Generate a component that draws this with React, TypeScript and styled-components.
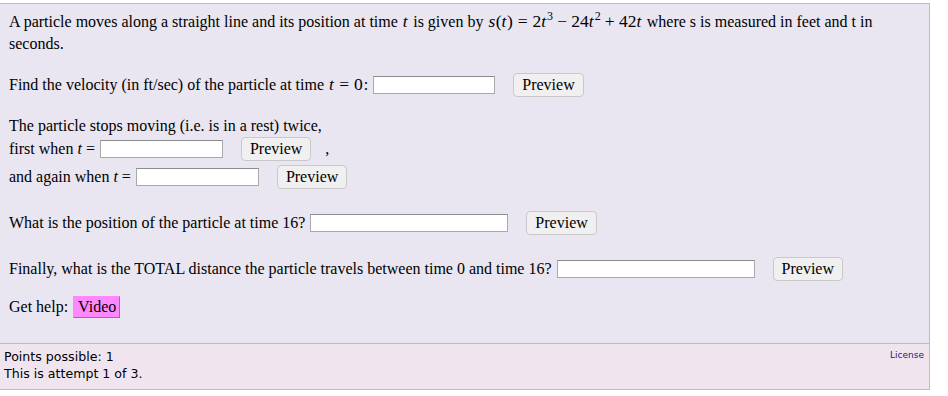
import React from "react";
import styled, { createGlobalStyle } from "styled-components";

const GlobalStyle = createGlobalStyle`
  html, body {
    margin: 0;
    padding: 0;
    background: #ffffff;
  }
  body {
    font-family: "Liberation Serif", "Times New Roman", serif;
    font-size: 16px;
    color: #000000;
  }
`;

const App = () => {
  return (
    <>
      <GlobalStyle />
      <Page>
        <QuestionBox>
          <Intro>
            A particle moves along a straight line and its position at time{" "}
            <MathExpr>
              <Var>t</Var>
            </MathExpr>{" "}
            is given by{" "}
            <MathExpr>
              <Var>s</Var>(<Var>t</Var>)<Rel>=</Rel>2<Var>t</Var>
              <Sup>3</Sup>
              <Bin>−</Bin>24<Var>t</Var>
              <Sup>2</Sup>
              <Bin>+</Bin>42<Var>t</Var>
            </MathExpr>{" "}
            where s is measured in feet and t in seconds.
          </Intro>

          <Row $top={18}>
            <Label>
              Find the velocity (in ft/sec) of the particle at time{" "}
              <MathExpr>
                <Var>t</Var>
                <Rel>=</Rel>0
              </MathExpr>
              :
            </Label>
            <AnswerInput $width={122} />
            <PreviewButton>Preview</PreviewButton>
          </Row>

          <Text $top={18}>The particle stops moving (i.e. is in a rest) twice,</Text>
          <Row $top={0}>
            <Label>
              first when <i>t</i> =
            </Label>
            <AnswerInput $width={123} />
            <PreviewButton>Preview</PreviewButton>
            <Comma>,</Comma>
          </Row>
          <Row $top={4}>
            <Label>
              and again when <i>t</i> =
            </Label>
            <AnswerInput $width={123} />
            <PreviewButton>Preview</PreviewButton>
          </Row>

          <Row $top={22}>
            <Label>What is the position of the particle at time 16?</Label>
            <AnswerInput $width={198} />
            <PreviewButton>Preview</PreviewButton>
          </Row>

          <Row $top={22}>
            <Label>
              Finally, what is the TOTAL distance the particle travels between time 0
              and time 16?
            </Label>
            <AnswerInput $width={198} />
            <PreviewButton>Preview</PreviewButton>
          </Row>

          <HelpRow>
            <Label>Get help:</Label>
            <VideoButton>Video</VideoButton>
          </HelpRow>
        </QuestionBox>

        <Footer>
          <FooterText>
            <div>Points possible: 1</div>
            <div>This is attempt 1 of 3.</div>
          </FooterText>
          <LicenseLink href="#">License</LicenseLink>
        </Footer>
      </Page>
    </>
  );
};

export default App;

const Page = styled.div`
  width: 931px;
  margin: 3px 0 0 -1px;
`;

const QuestionBox = styled.div`
  background-color: #e9e6f1;
  border: 1px solid #bcb8da;
  padding: 7px 8px 25px 9px;
`;

const Intro = styled.div`
  line-height: 22px;
  max-width: 884px;
`;

const Text = styled.div<{ $top: number }>`
  line-height: 22px;
  margin-top: ${(p) => p.$top}px;
`;

const Row = styled.div<{ $top: number }>`
  display: flex;
  align-items: center;
  height: 24px;
  margin-top: ${(p) => p.$top}px;
  white-space: nowrap;
`;

const HelpRow = styled.div`
  display: flex;
  align-items: center;
  height: 22px;
  margin-top: 15px;
`;

const Label = styled.span`
  margin-right: 5px;
`;

const MathExpr = styled.span`
  font-size: 17.5px;
  line-height: 0;
  white-space: nowrap;
  padding: 0 1px;
`;

const Var = styled.i`
  font-style: italic;
  padding-right: 0.5px;
`;

const Rel = styled.span`
  margin: 0 0.28em;
`;

const Bin = styled.span`
  margin: 0 0.24em;
`;

const Sup = styled.sup`
  font-size: 12px;
  line-height: 0;
  vertical-align: 7px;
  margin-left: 0.5px;
`;

const AnswerInput = styled.input.attrs({ type: "text" })<{ $width: number }>`
  box-sizing: border-box;
  width: ${(p) => p.$width}px;
  height: 18px;
  padding: 0 2px;
  background: #ffffff;
  border: 1px solid #a9a9a9;
  border-top-color: #8c8c8c;
  font-family: "Liberation Serif", serif;
  font-size: 14px;
  outline: none;
`;

const PreviewButton = styled.button`
  box-sizing: border-box;
  height: 24px;
  margin-left: 18px;
  padding: 0 8px;
  background-color: #f0f0f0;
  border: 1px solid #c9c9c9;
  border-radius: 4px;
  font-family: "Liberation Serif", "Times New Roman", serif;
  font-size: 16px;
  color: #000000;
  cursor: pointer;
`;

const Comma = styled.span`
  margin-left: 14px;
`;

const VideoButton = styled.span`
  box-sizing: border-box;
  display: inline-flex;
  align-items: center;
  height: 22px;
  padding: 0 3px 0 4px;
  background-color: #ff88ff;
  border: 1px solid #ff88ff;
  border-right-color: #b25fb2;
  border-bottom-color: #b25fb2;
  font-size: 16px;
`;

const Footer = styled.div`
  display: flex;
  justify-content: space-between;
  align-items: flex-start;
  height: 46px;
  background-color: #f0e5ef;
  border: 1px solid #bcb8da;
  border-top: none;
  padding: 4px 5px 0 4px;
  box-sizing: border-box;
`;

const FooterText = styled.div`
  font-family: "DejaVu Sans", Verdana, sans-serif;
  font-size: 12.6px;
  line-height: 17px;
  color: #000000;
`;

const LicenseLink = styled.a`
  font-family: "DejaVu Sans", Verdana, sans-serif;
  font-size: 9px;
  color: #1a1a80;
  text-decoration: none;
  margin-top: 2px;
`;
